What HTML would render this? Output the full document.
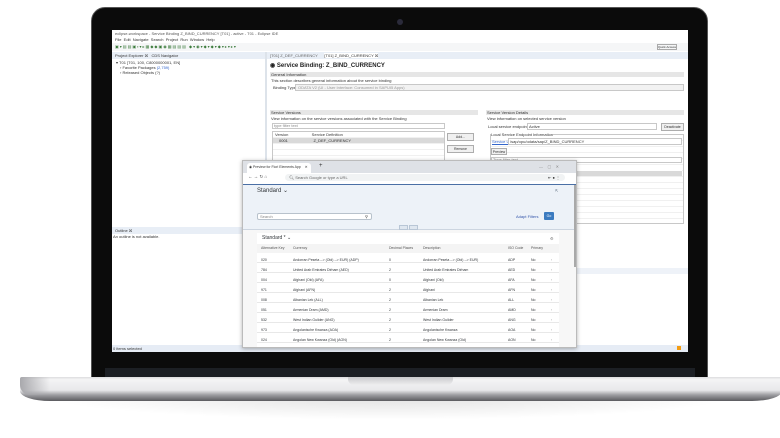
<!DOCTYPE html>
<html><head><style>
*{margin:0;padding:0;box-sizing:border-box}
body{width:780px;height:438px;background:#fff;position:relative;overflow:hidden;font-family:"Liberation Sans",sans-serif;font-size:4px;color:#333}
.a{position:absolute}
.t{position:absolute;white-space:nowrap;font-size:4px;line-height:5px;color:#333}
.bar{position:absolute;background:#e6e6e6}
.in{position:absolute;border:1px solid #c8c8c8;background:#fff}
.btn{position:absolute;border:1px solid #adadad;background:#f0f0f0;font-size:3.5px;text-align:center;line-height:6px}
</style></head><body>
<!-- shadow -->
<div class="a" style="left:40px;top:396px;width:700px;height:24px;background:radial-gradient(ellipse at 50% 0%,rgba(0,0,0,0.12),rgba(0,0,0,0) 70%)"></div>
<!-- lid -->
<div class="a" style="left:91px;top:7px;width:617px;height:372px;background:#0b0b0b;border-radius:14px 14px 2px 2px;border:1px solid #555"></div>
<div class="a" style="left:397px;top:19px;width:6px;height:6px;border-radius:50%;background:#2a2a3a"></div>
<div class="a" style="left:105px;top:368px;width:590px;height:10px;background:#1c1f24"></div>
<!-- base -->
<div class="a" style="left:20px;top:377px;width:762px;height:24px;border-radius:2px 2px 30px 30px/2px 2px 10px 10px;background:linear-gradient(#dcdcde 0%,#f4f4f5 10%,#e8e8ea 55%,#9c9ca0 75%,#5a5a5e 100%)"></div>
<div class="a" style="left:20px;top:377px;width:30px;height:18px;background:linear-gradient(90deg,#a8a8ac,rgba(230,230,232,0));border-radius:2px 0 0 10px"></div>
<div class="a" style="left:348px;top:377px;width:105px;height:8px;background:linear-gradient(#c9c9cc,#eeeeef);border-radius:0 0 6px 6px"></div>
<!-- screen -->
<div class="a" style="left:112px;top:30px;width:576px;height:322px;background:#fff;overflow:hidden">
 <div class="t" style="left:3px;top:1px;color:#555">eclipse-workspace - Service Binding Z_BIND_CURRENCY [T01] - active - T01 - Eclipse IDE</div>
 <div class="t" style="left:3px;top:7px">File&nbsp; Edit&nbsp; Navigate&nbsp; Search&nbsp; Project&nbsp; Run&nbsp; Window&nbsp; Help</div>
 <div class="a" style="left:0;top:13px;width:576px;height:8px;background:#f5f6f7"></div>
 <div class="t" style="left:3px;top:14px;color:#3a7a3a;letter-spacing:1px">▣▾▤▤▣▪▾▸▦◆◆▣◉▦▤▤▤ ◆▾◉▾◆▾◆▾◆▾▸▾▸▾</div>
 <div class="a" style="left:545px;top:14px;width:20px;height:6px;border:1px solid #aaa;font-size:3px;line-height:4px;text-align:center">Quick Access</div>
 <!-- left panel -->
 <div class="a" style="left:0;top:22px;width:153px;height:7px;background:#e8eef6"></div>
 <div class="t" style="left:3px;top:23px">Project Explorer ☒ &nbsp; CDS Navigator</div>
 <div class="t" style="left:4px;top:30px">▾ T01 [T01, 100, C8000000001, EN]</div>
 <div class="t" style="left:8px;top:35px">› Favorite Packages <span style="color:#36c">(2,759)</span></div>
 <div class="t" style="left:8px;top:40px">› Released Objects (?)</div>
 <div class="a" style="left:0;top:197px;width:153px;height:7px;background:#e8eef6"></div>
 <div class="t" style="left:3px;top:198px">Outline ☒</div>
 <div class="t" style="left:1px;top:204px">An outline is not available.</div>
 <div class="a" style="left:153px;top:22px;width:2px;height:293px;background:#dde3ea"></div>
 <!-- editor -->
 <div class="a" style="left:155px;top:22px;width:421px;height:7px;background:#e8eef6"></div>
 <div class="t" style="left:158px;top:23px;color:#666">[T01] Z_DEF_CURRENCY &nbsp;&nbsp;&nbsp;&nbsp; <span style="background:#fff;color:#333">[T01] Z_BIND_CURRENCY ☒</span></div>
 <div class="t" style="left:158px;top:33px;font-size:6px;line-height:7px;font-weight:bold;color:#222">◉ Service Binding: Z_BIND_CURRENCY</div>
 <div class="bar" style="left:158px;top:42px;width:414px;height:5px"></div>
 <div class="t" style="left:159px;top:42px">General Information</div>
 <div class="t" style="left:159px;top:48px">This section describes general information about the service binding</div>
 <div class="t" style="left:161px;top:55px">Binding Type</div>
 <div class="in" style="left:183px;top:54px;width:389px;height:7px;background:#f2f2f2"></div>
 <div class="t" style="left:186px;top:55px;color:#999">ODATA V2 (UI - User Interface: Consumed in SAPUI5 Apps)</div>
 <div class="bar" style="left:158px;top:80px;width:208px;height:5px"></div>
 <div class="t" style="left:159px;top:80px">Service Versions</div>
 <div class="t" style="left:159px;top:86px">View information on the service versions associated with the Service Binding</div>
 <div class="in" style="left:160px;top:93px;width:173px;height:6px"></div>
 <div class="t" style="left:162px;top:93px;color:#888">type filter text</div>
 <div class="in" style="left:160px;top:101px;width:173px;height:80px;background:repeating-linear-gradient(#fff 0 5px,#f0f0f0 5px 6px)"></div>
 <div class="t" style="left:163px;top:102px;background:#fff;width:169px">Version &nbsp;&nbsp;&nbsp;&nbsp;&nbsp;&nbsp;&nbsp;&nbsp;&nbsp;&nbsp;&nbsp;&nbsp;&nbsp;&nbsp;&nbsp;&nbsp;&nbsp;&nbsp;&nbsp; Service Definition</div>
 <div class="a" style="left:161px;top:108px;width:171px;height:5px;background:#d9d9d9"></div>
 <div class="t" style="left:167px;top:108px">0001 &nbsp;&nbsp;&nbsp;&nbsp;&nbsp;&nbsp;&nbsp;&nbsp;&nbsp;&nbsp;&nbsp;&nbsp;&nbsp;&nbsp;&nbsp;&nbsp;&nbsp;&nbsp;&nbsp;&nbsp;&nbsp; Z_DEF_CURRENCY</div>
 <div class="btn" style="left:335px;top:103px;width:27px;height:8px">Add...</div>
 <div class="btn" style="left:335px;top:115px;width:27px;height:8px">Remove</div>
 <div class="bar" style="left:374px;top:80px;width:198px;height:5px"></div>
 <div class="t" style="left:375px;top:80px">Service Version Details</div>
 <div class="t" style="left:375px;top:86px">View information on selected service version</div>
 <div class="t" style="left:376px;top:94px">Local service endpoint:</div>
 <div class="in" style="left:415px;top:93px;width:130px;height:7px"></div>
 <div class="t" style="left:417px;top:94px">Active</div>
 <div class="btn" style="left:549px;top:93px;width:23px;height:8px">Deactivate</div>
 <div class="in" style="left:378px;top:104px;width:194px;height:90px;background:repeating-linear-gradient(#fff 0 5px,#f0f0f0 5px 6px)"></div>
 <div class="t" style="left:379px;top:102px;background:#fff">Local Service Endpoint Information</div>
 <div class="t" style="left:380px;top:109px;color:#36c;text-decoration:underline">Service URL:</div>
 <div class="in" style="left:396px;top:108px;width:174px;height:7px"></div>
 <div class="t" style="left:398px;top:109px">/sap/opu/odata/sap/Z_BIND_CURRENCY</div>
 <div class="btn" style="left:379px;top:118px;width:16px;height:7px">Preview</div>
 <div class="in" style="left:379px;top:127px;width:191px;height:6px"></div>
 <div class="t" style="left:381px;top:127px;color:#888">Type filter text</div>
 <div class="t" style="left:380px;top:136px;background:#fff;width:190px">Entity Set and Association</div>
 <div class="a" style="left:380px;top:141px;width:190px;height:5px;background:#d9d9d9"></div>
 <div class="t" style="left:387px;top:141px"><span style="color:#36c">▶</span> Currency</div>
 <div class="a" style="left:155px;top:238px;width:421px;height:6px;background:#eef2f8"></div>
 <div class="a" style="left:0;top:315px;width:576px;height:7px;background:#e6ecf5"></div>
 <div class="t" style="left:1px;top:316px">0 items selected</div>
 <div class="a" style="left:565px;top:316px;width:4px;height:4px;background:#f39c12"></div>
</div>
<!-- browser window -->
<div class="a" style="left:242px;top:160px;width:335px;height:188px;background:#fff;border:1px solid #bbb;box-shadow:0 1px 4px rgba(0,0,0,.3);overflow:hidden">
 <div class="a" style="left:0;top:0;width:335px;height:12px;background:#dee1e6"></div>
 <div class="a" style="left:4px;top:2px;width:64px;height:10px;background:#fff;border-radius:3px 3px 0 0"></div>
 <div class="t" style="left:6px;top:4px;font-size:3.5px">◉ Preview for Fiori Elements App &nbsp;&nbsp; ✕</div>
 <div class="t" style="left:76px;top:3px;font-size:6px">+</div>
 <div class="t" style="left:296px;top:3px;color:#888">—&nbsp;&nbsp;&nbsp; ▢&nbsp;&nbsp;&nbsp; ✕</div>
 <div class="t" style="left:5px;top:13px;color:#555;font-size:4.5px">← → ↻ ⌂</div>
 <div class="a" style="left:42px;top:13px;width:280px;height:7px;background:#f1f3f4;border-radius:4px"></div>
 <div class="t" style="left:46px;top:14px;color:#666">🔍︎ Search Google or type a URL</div>
 <div class="t" style="left:305px;top:14px;color:#333">⇤ ● ⋮</div>
 <div class="a" style="left:0;top:23px;width:335px;height:1px;background:#4a6fa5"></div>
 <div class="a" style="left:0;top:24px;width:335px;height:44px;background:#edf2f8"></div>
 <div class="t" style="left:14px;top:26px;font-size:6px;line-height:8px;color:#32363a">Standard ⌄</div>
 <div class="t" style="left:312px;top:27px;color:#6a7a8a">⇱</div>
 <div class="a" style="left:14px;top:52px;width:115px;height:7px;background:#fff;border:1px solid #b8c2cc;border-radius:2px"></div>
 <div class="t" style="left:17px;top:53px;color:#888">Search</div>
 <div class="t" style="left:122px;top:53px">⚲</div>
 <div class="t" style="left:273px;top:53px;color:#35a">Adapt Filters</div>
 <div class="a" style="left:301px;top:51px;width:10px;height:8px;background:#3b7bc0;border-radius:1px;color:#fff;font-size:3.5px;line-height:8px;text-align:center">Go</div>
 <div class="a" style="left:0;top:68px;width:335px;height:1px;background:#ccd5e0"></div>
 <div class="a" style="left:156px;top:64px;width:9px;height:5px;background:#dfe7f0;border:1px solid #b8c6d6"></div>
 <div class="a" style="left:166px;top:64px;width:9px;height:5px;background:#dfe7f0;border:1px solid #b8c6d6"></div>
 <div class="a" style="left:0;top:69px;width:335px;height:119px;background:#f7f7f7"></div>
 <div class="a" style="left:14px;top:72px;width:302px;height:116px;background:#fff"></div>
 <div class="t" style="left:19px;top:74px;font-size:5px;line-height:7px;color:#32363a">Standard * ⌄</div>
 <div class="t" style="left:307px;top:75px;color:#777">⚙</div>
 <div class="a" style="left:14px;top:83px;width:302px;height:9px;background:#f4f4f4"></div>
 <div class="t" style="left:18px;top:85px;color:#555;font-size:3.5px">Alternative Key</div>
 <div class="t" style="left:50px;top:85px;color:#555;font-size:3.5px">Currency</div>
 <div class="t" style="left:146px;top:85px;color:#555;font-size:3.5px">Decimal Places</div>
 <div class="t" style="left:180px;top:85px;color:#555;font-size:3.5px">Description</div>
 <div class="t" style="left:265px;top:85px;color:#555;font-size:3.5px">ISO Code</div>
 <div class="t" style="left:288px;top:85px;color:#555;font-size:3.5px">Primary</div>
 <div class="a" style="left:14px;top:92px;width:302px;height:96px;background:repeating-linear-gradient(#fff 0 9px,#e8e8e8 9px 10px)"></div>
 <div class="a" style="left:18px;top:94px;font-size:3.5px;line-height:10px;color:#32363a;white-space:pre">020
784
004
971
008
051
532
973
024</div>
 <div class="a" style="left:50px;top:94px;font-size:3.5px;line-height:10px;color:#32363a;white-space:pre">Andorran Peseta --&gt; (Old) --&gt; EUR) (ADP)
United Arab Emirates Dirham (AED)
Afghani (Old) (AFA)
Afghani (AFN)
Albanian Lek (ALL)
Armenian Dram (AMD)
West Indian Guilder (ANG)
Angolanische Kwanza (AOA)
Angolan New Kwanza (Old) (AON)</div>
 <div class="a" style="left:146px;top:94px;font-size:3.5px;line-height:10px;color:#32363a;white-space:pre">0
2
0
2
2
2
2
2
2</div>
 <div class="a" style="left:180px;top:94px;font-size:3.5px;line-height:10px;color:#32363a;white-space:pre">Andorran Peseta --&gt; (Old) --&gt; EUR)
United Arab Emirates Dirham
Afghani (Old)
Afghani
Albanian Lek
Armenian Dram
West Indian Guilder
Angolanische Kwanza
Angolan New Kwanza (Old)</div>
 <div class="a" style="left:265px;top:94px;font-size:3.5px;line-height:10px;color:#32363a;white-space:pre">ADP
AED
AFA
AFN
ALL
AMD
ANG
AOA
AON</div>
 <div class="a" style="left:288px;top:94px;font-size:3.5px;line-height:10px;color:#32363a;white-space:pre">No
No
No
No
No
No
No
No
No</div>
 <div class="a" style="left:308px;top:94px;font-size:3.5px;line-height:10px;color:#999;white-space:pre">›
›
›
›
›
›
›
›
›</div>
 <div class="a" style="left:331px;top:24px;width:3px;height:82px;background:#a9a9a9"></div>
</div>
</body></html>
